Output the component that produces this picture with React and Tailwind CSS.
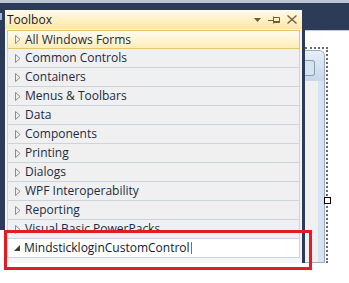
import React from "react";

const groups = [
  "Common Controls",
  "Containers",
  "Menus & Toolbars",
  "Data",
  "Components",
  "Printing",
  "Dialogs",
  "WPF Interoperability",
  "Reporting",
  "Visual Basic PowerPacks",
];

function Collapsed() {
  return (
    <svg width="6" height="9" viewBox="0 0 6 9" className="shrink-0">
      <path d="M0.5 0.5 L5 4.5 L0.5 8.5 Z" fill="none" stroke="#8c8c8c" strokeWidth="1" />
    </svg>
  );
}

function Expanded() {
  return (
    <svg width="6" height="6" viewBox="0 0 6 6" className="shrink-0">
      <path d="M6 0 L6 6 L0 6 Z" fill="#3c3c3c" />
    </svg>
  );
}

function TitleButtons() {
  return (
    <div className="flex items-center gap-[7px] text-[#6e5c36]">
      <svg width="7" height="4" viewBox="0 0 7 4">
        <path d="M0 0 H7 L3.5 4 Z" fill="#6e5c36" />
      </svg>
      <svg width="12" height="8" viewBox="0 0 12 8">
        <path d="M0 4.5 H5" stroke="#6e5c36" strokeWidth="1" />
        <path d="M5.5 0.5 V7.5" stroke="#6e5c36" strokeWidth="1" />
        <path d="M5.5 1.5 H11.5 V6.5 H5.5" fill="none" stroke="#6e5c36" strokeWidth="1" />
        <path d="M6 5.5 H11" stroke="#6e5c36" strokeWidth="1" />
      </svg>
      <svg width="10" height="9" viewBox="0 0 10 9">
        <path d="M0.5 0.5 L9.5 8.5 M9.5 0.5 L0.5 8.5" stroke="#6e5c36" strokeWidth="1.3" />
      </svg>
    </div>
  );
}

function Designer() {
  return (
    <div className="flex h-full flex-col">
      <div className="h-[1px] bg-[#c3cbd8]" />
      <div className="flex-1 bg-white pt-[16px]">
        <div className="relative h-[216px] w-[23px] border-r-2 border-t-2 border-dotted border-[#6a6a6a]">
          <div className="mt-[1px] h-[213px] w-[20px] overflow-hidden rounded-tr-[6px] border border-l-0 border-[#9aabc2] bg-[#d4e1f0]">
            <div className="h-[30px] bg-gradient-to-b from-[#e6eef8] to-[#c8d7ea] pt-[9px]">
              <div className="h-[16px] w-[10px] rounded-r-[3px] border border-l-0 border-[#8b9bb2] bg-[#d7e3f1]" />
            </div>
            <div className="flex h-full">
              <div className="w-[13px] bg-[#f0f0f0]" />
              <div className="w-[5px] bg-[#d5e3f2]" />
            </div>
          </div>
          <div className="absolute right-[-5px] top-[148px] h-[7px] w-[7px] border border-black bg-white" />
        </div>
      </div>
    </div>
  );
}

export default function App() {
  return (
    <div
      className="relative h-[283px] w-[349px] overflow-hidden bg-white"
      style={{ fontFamily: '"Open Sans", "Noto Sans", sans-serif' }}
    >
      <div className="h-[3px] bg-[#bcc5d3]" />
      <div className="flex h-[260px]">
        <div className="flex w-[5px] flex-col">
          <div className="h-[227px] bg-[#2b3b58] pt-[10px]">
            <div className="h-[7px] w-[2px] bg-[#9fb6d6]" />
          </div>
        </div>
        <div className="flex w-[300px] flex-col">
          <div className="h-[7px] bg-[#2b3b58]" />
          <div className="flex flex-1">
            <div className="flex w-[297px] flex-col bg-[#f4f5f7]">
              <div className="flex h-[19px] items-center justify-between bg-gradient-to-b from-[#fffaea] to-[#ffe8a4] pl-[2px] pr-[5px]">
                <span className="text-[12px] leading-none text-[#1a1a2a]">Toolbox</span>
                <TitleButtons />
              </div>
              <div className="flex flex-col pl-[2px] pr-[2px] pt-[1px]">
                <div className="flex h-[19px] items-center gap-[4px] border border-[#e6c66c] bg-gradient-to-b from-[#fffbef] to-[#ffecb6] pl-[7px]">
                  <Collapsed />
                  <span className="text-[12px] leading-none text-[#1b2b45]">All Windows Forms</span>
                </div>
                {groups.map((g) => (
                  <div
                    key={g}
                    className="flex h-[19px] items-center gap-[4px] border border-t-0 border-[#cbd3df] bg-[#f0f0f0] pl-[7px]"
                  >
                    <Collapsed />
                    <span className="text-[12px] leading-none text-[#1b2b45]">{g}</span>
                  </div>
                ))}
                <div className="flex h-[19px] items-center gap-[4px] border border-t-0 border-[#cbd3df] bg-white pl-[6px]">
                  <Expanded />
                  <span className="border-r border-[#3a7bd5] pr-[1px] text-[12px] leading-none text-[#111a33]">
                    MindstickloginCustomControl
                  </span>
                </div>
              </div>
            </div>
            <div className="w-[3px] bg-[#2b3b58]" />
          </div>
        </div>
        <div className="flex flex-1 flex-col">
          <div className="h-[27px] bg-[#2b3b58]" />
          <div className="flex-1">
            <Designer />
          </div>
        </div>
      </div>
      <div className="pointer-events-none absolute left-[4px] top-[230px] h-[40px] w-[308px] border-[3px] border-[#e31b23]" />
    </div>
  );
}
